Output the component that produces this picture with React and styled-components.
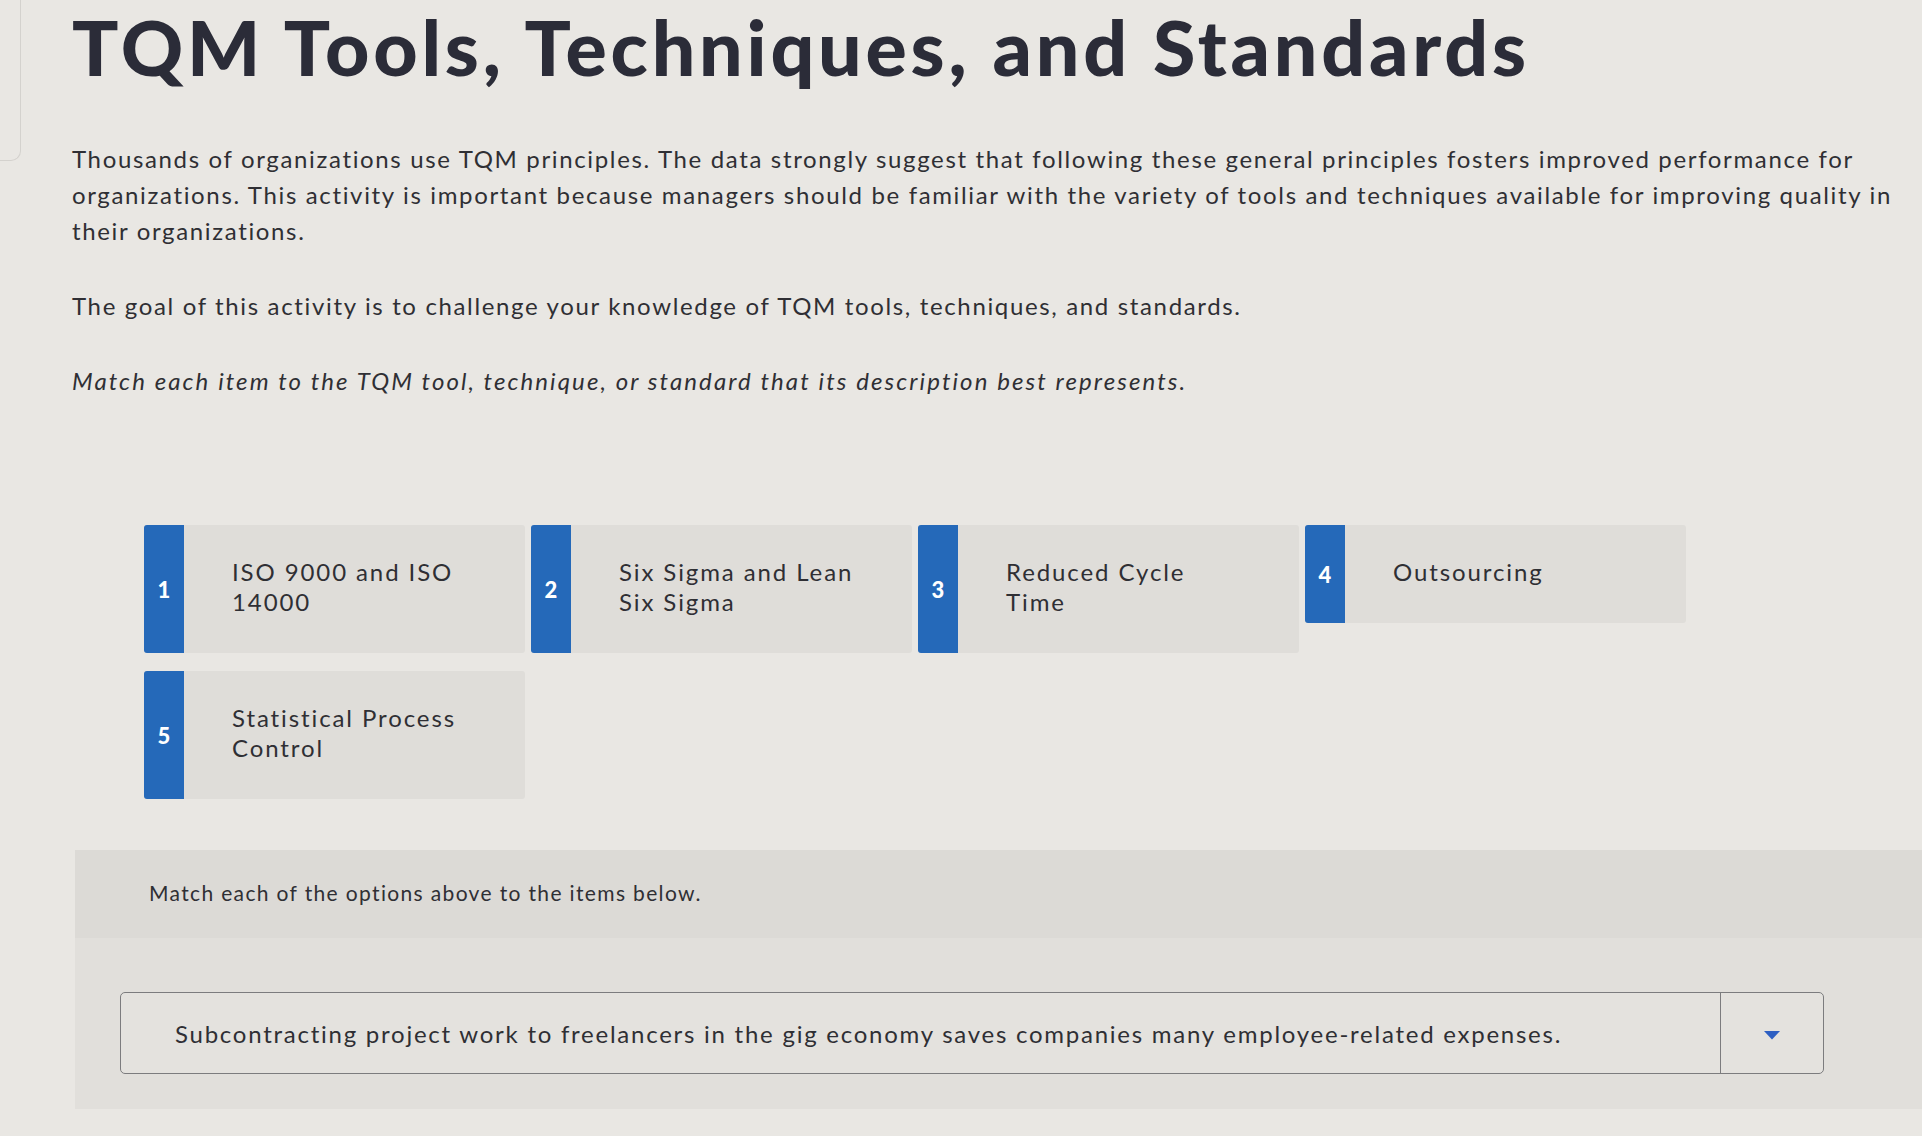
import React from 'react';
import styled, { createGlobalStyle } from 'styled-components';

const GlobalStyle = createGlobalStyle`
  html, body {
    margin: 0;
    padding: 0;
    background: #e9e7e3;
  }
  body {
    font-family: 'Lato', 'Liberation Sans', sans-serif;
    color: #2e2e33;
  }
`;

const Page = styled.div`
  display: flex;
  width: 1922px;
  min-height: 1136px;
  overflow: hidden;
`;

// faint panel edge showing at the top left of the photo
const SideStub = styled.div`
  flex: 0 0 20px;
  height: 160px;
  border-right: 1px solid #d4d2ce;
  border-bottom: 1px solid #d4d2ce;
  border-bottom-right-radius: 10px;
`;

const Main = styled.div`
  flex: 1;
  padding: 0 0 0 51px;
  display: flex;
  flex-direction: column;
`;

const Title = styled.h1`
  margin: 0;
  font-size: 77px;
  line-height: 93px;
  font-weight: 900;
  color: #2b2c38;
  letter-spacing: 3.8px;
  white-space: nowrap;
`;

const Text = styled.p`
  margin: ${(p) => p.mt || 0}px 0 0 0;
  width: 1825px;
  font-size: 24px;
  line-height: 36px;
  font-weight: 400;
  font-style: ${(p) => (p.italic ? 'italic' : 'normal')};
  color: #2f2f34;
  letter-spacing: ${(p) => (p.italic ? 2.1 : 1.65)}px;
`;

const CardGrid = styled.div`
  margin: 126px 0 0 72px;
  display: grid;
  grid-template-columns: repeat(4, 381px);
  column-gap: 6px;
  row-gap: 18px;
  align-items: start;
`;

const Card = styled.div`
  display: flex;
  background: #dfddd9;
  border-radius: 3px;
`;

const Tab = styled.div`
  flex: 0 0 40px;
  display: flex;
  align-items: center;
  justify-content: center;
  background: #2569b9;
  border-radius: 3px 0 0 3px;
  color: #fff;
  font-weight: 900;
  font-size: 22px;
`;

const CardLabel = styled.div`
  padding: 32px 16px 36px 48px;
  font-size: 24px;
  line-height: 30px;
  letter-spacing: 1.9px;
  color: #2f2f34;
`;

const MatchPanel = styled.div`
  margin: 51px 0 0 3px;
  background: #e1dfdb;
  padding-bottom: 35px;
`;

const PanelHeader = styled.div`
  height: 88px;
  box-sizing: border-box;
  padding: 30px 0 0 74px;
  background: #dcdad6;
  font-size: 21px;
  letter-spacing: 1.35px;
  color: #2f2f34;
`;

const SelectBox = styled.div`
  margin: 54px 0 0 45px;
  width: 1704px;
  height: 82px;
  display: flex;
  border: 1.5px solid #7c7c7e;
  border-radius: 5px;
  box-sizing: border-box;
  background: #e4e2de;
`;

const SelectText = styled.div`
  flex: 1;
  display: flex;
  align-items: center;
  padding-left: 54px;
  font-size: 24px;
  letter-spacing: 1.75px;
  color: #2f2f34;
`;

const SelectButton = styled.div`
  flex: 0 0 102px;
  border-left: 1.5px solid #7c7c7e;
  display: flex;
  align-items: center;
  justify-content: center;
  padding-top: 3px;
`;

const items = [
  { n: 1, label: ['ISO 9000 and ISO', '14000'] },
  { n: 2, label: ['Six Sigma and Lean', 'Six Sigma'] },
  { n: 3, label: ['Reduced Cycle', 'Time'] },
  { n: 4, label: ['Outsourcing'] },
  { n: 5, label: ['Statistical Process', 'Control'] },
];

const OptionCard = ({ n, label }) => (
  <Card>
    <Tab>{n}</Tab>
    <CardLabel>
      {label.map((l, i) => (
        <div key={i}>{l}</div>
      ))}
    </CardLabel>
  </Card>
);

const App = () => {
  return (
    <Page>
      <GlobalStyle />
      <SideStub />
      <Main>
        <Title>TQM Tools, Techniques, and Standards</Title>
        <Text mt={48}>
          Thousands of organizations use TQM principles. The data strongly suggest that following these
          general principles fosters improved performance for organizations. This activity is important
          because managers should be familiar with the variety of tools and techniques available for
          improving quality in their organizations.
        </Text>
        <Text mt={39}>
          The goal of this activity is to challenge your knowledge of TQM tools, techniques, and standards.
        </Text>
        <Text mt={39} italic>
          Match each item to the TQM tool, technique, or standard that its description best represents.
        </Text>
        <CardGrid>
          {items.map((it) => (
            <OptionCard key={it.n} n={it.n} label={it.label} />
          ))}
        </CardGrid>
        <MatchPanel>
          <PanelHeader>Match each of the options above to the items below.</PanelHeader>
          <SelectBox>
            <SelectText>
              Subcontracting project work to freelancers in the gig economy saves companies many
              employee-related expenses.
            </SelectText>
            <SelectButton>
              <svg width="18" height="10" viewBox="0 0 18 10">
                <path d="M1 1 L17 1 L9 9.5 Z" fill="#2d5fc2" />
              </svg>
            </SelectButton>
          </SelectBox>
        </MatchPanel>
      </Main>
    </Page>
  );
};

export default App;
